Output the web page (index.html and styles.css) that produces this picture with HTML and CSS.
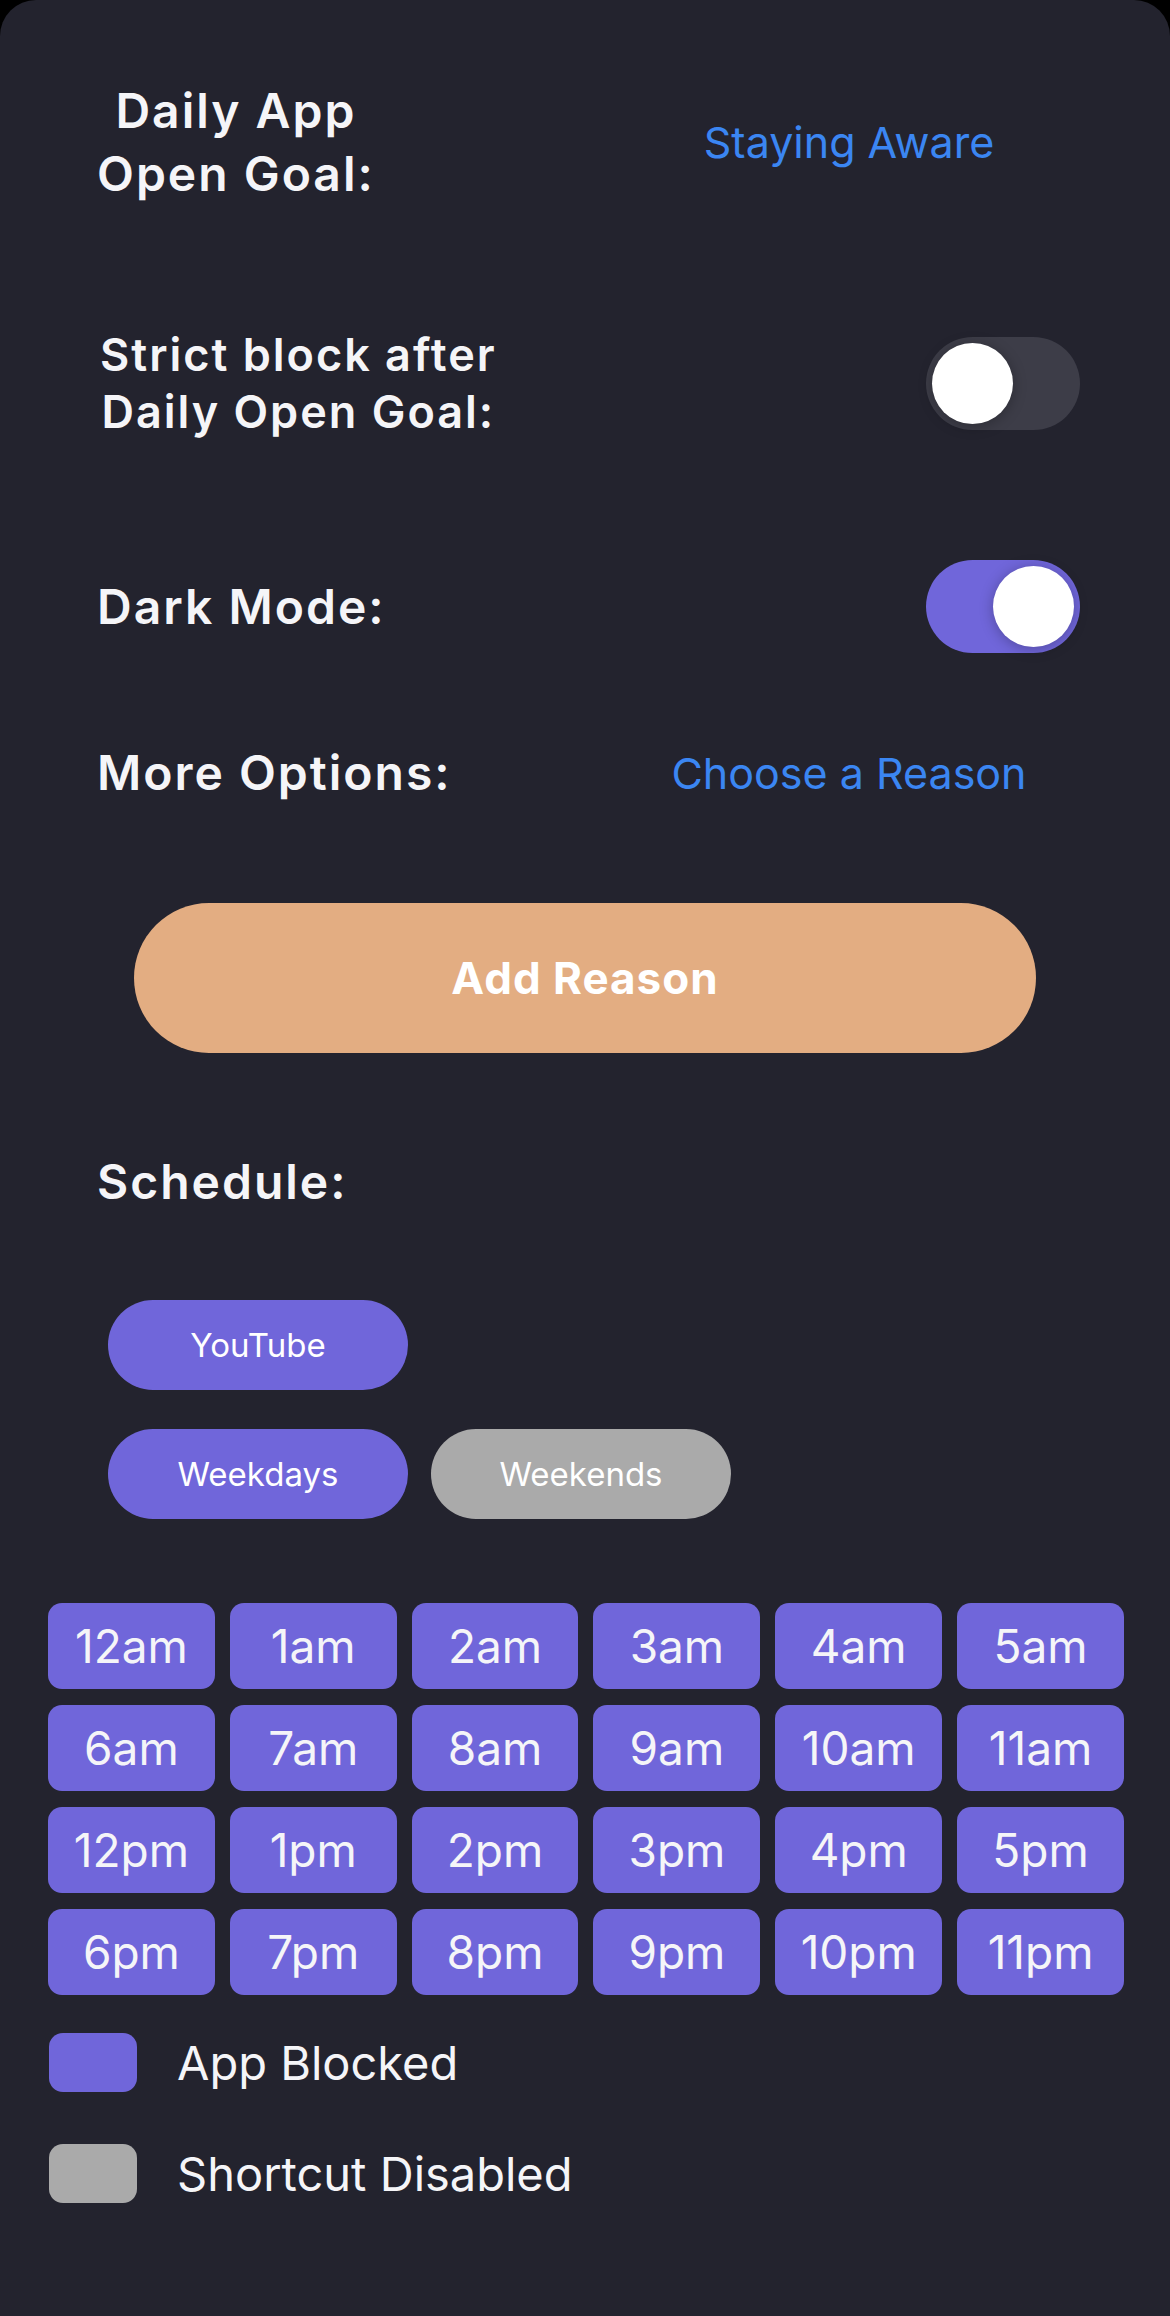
FILE: index.html
```html
<!doctype html>
<html lang="en">
  <head>
    <meta charset="UTF-8" />
    <meta name="viewport" content="width=device-width, initial-scale=1.0" />
    <title>Settings</title>
    <link rel="stylesheet" href="styles.css">
  </head>
  <body>
    <main class="Sheet">
      <div class="Row Row--goal">
        <div class="Label Label--center">Daily App<br />Open Goal:</div>
        <a class="Link">Staying Aware</a>
      </div>

      <div class="Row Row--strict">
        <div class="Label Label--center Label--small">Strict block after<br />Daily Open Goal:</div>
        <div class="Toggle"><span class="Toggle-knob"></span></div>
      </div>

      <div class="Row Row--dark">
        <div class="Label">Dark Mode:</div>
        <div class="Toggle Toggle--on"><span class="Toggle-knob"></span></div>
      </div>

      <div class="Row Row--more">
        <div class="Label">More Options:</div>
        <a class="Link">Choose a Reason</a>
      </div>

      <button class="AddButton">Add Reason</button>

      <h2 class="Label Schedule">Schedule:</h2>

      <div class="Pills Pills--apps">
        <span class="Pill">YouTube</span>
      </div>
      <div class="Pills Pills--days">
        <span class="Pill">Weekdays</span>
        <span class="Pill Pill--off">Weekends</span>
      </div>

      <div class="Hours">
        <span class="Hour">12am</span>
        <span class="Hour">1am</span>
        <span class="Hour">2am</span>
        <span class="Hour">3am</span>
        <span class="Hour">4am</span>
        <span class="Hour">5am</span>
        <span class="Hour">6am</span>
        <span class="Hour">7am</span>
        <span class="Hour">8am</span>
        <span class="Hour">9am</span>
        <span class="Hour">10am</span>
        <span class="Hour">11am</span>
        <span class="Hour">12pm</span>
        <span class="Hour">1pm</span>
        <span class="Hour">2pm</span>
        <span class="Hour">3pm</span>
        <span class="Hour">4pm</span>
        <span class="Hour">5pm</span>
        <span class="Hour">6pm</span>
        <span class="Hour">7pm</span>
        <span class="Hour">8pm</span>
        <span class="Hour">9pm</span>
        <span class="Hour">10pm</span>
        <span class="Hour">11pm</span>
      </div>

      <ul class="Legend">
        <li class="Legend-item"><span class="Swatch"></span>App Blocked</li>
        <li class="Legend-item"><span class="Swatch Swatch--off"></span>Shortcut Disabled</li>
      </ul>
    </main>
  </body>
</html>
```

FILE: styles.css
```css
:root {
  --color-bg: #23232e;
  --color-text: #f5f5f8;
  --color-accent: #7066da;
  --color-link: #3b86f2;
  --color-orange: #e3ad82;
  --color-grey: #aaaaaa;
  --color-track: #3d3d48;
}

body {
  margin: 0;
  background-color: #000;
  font-family: "Inter", "Noto Sans", sans-serif;
  color: var(--color-text);
}

.Sheet {
  min-height: 2316px;
  box-sizing: border-box;
  padding-top: 79px;
  background-color: var(--color-bg);
  border-radius: 36px 36px 0 0;
}

.Row {
  display: flex;
  align-items: center;
  justify-content: space-between;
  padding: 0 90px 0 97px;
}

.Row--strict {
  margin-top: 121px;
}
.Row--dark {
  margin-top: 120px;
}
.Row--more {
  margin-top: 73px;
  height: 93px;
}

.Label {
  margin: 0;
  font-size: 48px;
  font-weight: 600;
  letter-spacing: 2px;
  line-height: 63px;
}

.Label--center {
  text-align: center;
}

.Label--small {
  font-size: 45px;
  line-height: 57px;
  padding-left: 3px;
}

.Link {
  flex-shrink: 0;
  width: 380px;
  margin-right: 41px;
  text-align: center;
  white-space: nowrap;
  font-size: 43px;
  color: var(--color-link);
}

.Toggle {
  position: relative;
  width: 154px;
  height: 93px;
  border-radius: 47px;
  background-color: var(--color-track);
}

.Toggle-knob {
  position: absolute;
  top: 6px;
  left: 6px;
  width: 81px;
  height: 81px;
  border-radius: 50%;
  background-color: #fff;
  box-shadow: 0 2px 14px rgba(0, 0, 0, 0.28);
}

.Toggle--on {
  background-color: var(--color-accent);
}
.Toggle--on .Toggle-knob {
  left: 67px;
}

.AddButton {
  display: block;
  width: 902px;
  height: 150px;
  margin: 84px 0 0 134px;
  border: 0;
  border-radius: 75px;
  background-color: var(--color-orange);
  font-family: inherit;
  font-size: 44px;
  font-weight: 700;
  letter-spacing: 1px;
  color: #fff;
}

.Schedule {
  margin: 99px 0 0 97px;
  line-height: 60px;
}

.Pills {
  display: flex;
  gap: 23px;
  padding-left: 108px;
}
.Pills--apps {
  margin-top: 88px;
}
.Pills--days {
  margin-top: 39px;
}

.Pill {
  display: flex;
  align-items: center;
  justify-content: center;
  width: 300px;
  height: 90px;
  border-radius: 45px;
  background-color: var(--color-accent);
  font-size: 33px;
  color: #fff;
}
.Pill--off {
  background-color: var(--color-grey);
}

.Hours {
  display: grid;
  grid-template-columns: repeat(6, 1fr);
  gap: 16px 15px;
  margin-top: 84px;
  padding: 0 46px 0 48px;
}

.Hour {
  display: flex;
  align-items: center;
  justify-content: center;
  height: 86px;
  border-radius: 14px;
  background-color: var(--color-accent);
  font-size: 46px;
}

.Legend {
  margin: 38px 0 0;
  padding: 0 0 0 49px;
  list-style: none;
}

.Legend-item {
  display: flex;
  align-items: center;
  gap: 40px;
  height: 59px;
  font-size: 47px;
}
.Legend-item + .Legend-item {
  margin-top: 52px;
}

.Swatch {
  width: 88px;
  height: 59px;
  border-radius: 14px;
  background-color: var(--color-accent);
}
.Swatch--off {
  background-color: var(--color-grey);
}
```
